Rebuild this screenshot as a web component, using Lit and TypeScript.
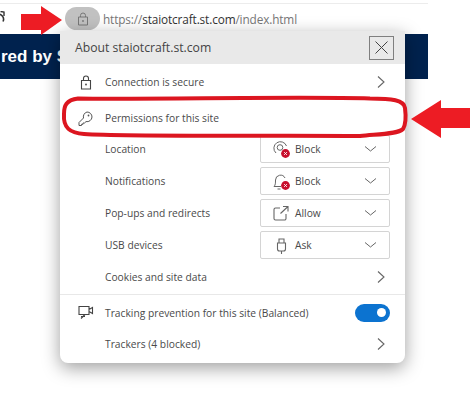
import { LitElement, html, css, svg } from "lit";
import { customElement } from "lit/decorators.js";

const chev = html`<svg class="chev" width="10" height="14" viewBox="0 0 10 14"><path d="M2 1.500 8 7 2 12.500" fill="none" stroke="#666" stroke-width="1.100"/></svg>`;
const down = html`<svg class="down" width="13" height="8" viewBox="0 0 13 8"><path d="M1 1.500l5.500 4.500L12 1.500" fill="none" stroke="#666" stroke-width="1"/></svg>`;
const badge = svg`<circle cx="13.500" cy="13.500" r="4.400" fill="#c8102e"/><path d="M12.200 12.200l2.600 2.600M14.800 12.200l-2.600 2.600" stroke="#fff" stroke-width="1"/>`;

const selects = {
  loc: svg`<path d="M4 13A6.500 6.500 0 1 1 14.500 6" fill="none" stroke="#666" stroke-width="1"/><circle cx="8" cy="7.500" r="2.800" fill="none" stroke="#666" stroke-width="1"/>${badge}`,
  bell: svg`<path d="M2 14.500c1.500-1.500 1.500-3.500 1.500-6.500a5 5 0 0 1 9.500-2M2 14.500h7M5.500 17h3" fill="none" stroke="#666" stroke-width="1"/>${badge}`,
  pop: svg`<path d="M8 4H3.500A1.500 1.500 0 0 0 2 5.500v9A1.500 1.500 0 0 0 3.500 16h9a1.500 1.500 0 0 0 1.500-1.500V10M8.500 9.500L16 2.500M11 2.500h5v5" fill="none" stroke="#666" stroke-width="1.100"/>`,
  usb: svg`<path d="M7 7V3h5v4M5.500 7h8v6a2 2 0 0 1-2 2h-4a2 2 0 0 1-2-2zM9.500 15v3" fill="none" stroke="#666" stroke-width="1.100"/>`,
};

const rows = [
  { label: "Location", icon: selects.loc, value: "Block" },
  { label: "Notifications", icon: selects.bell, value: "Block" },
  { label: "Pop-ups and redirects", icon: selects.pop, value: "Allow" },
  { label: "USB devices", icon: selects.usb, value: "Ask" },
];

@customElement("app-root")
export class AppRoot extends LitElement {
  static styles = css`
    :host { display: block; width: 474px; height: 402px; position: relative; overflow: hidden; background: #fff; font-family: "Open Sans", "Noto Sans", sans-serif; color: #4a4a4a; }
    .bar { width: 428px; height: 34px; box-sizing: border-box; border-top: 1px solid #ececec; margin-top: 3px; display: flex; align-items: center; padding: 0 0 4px 0; }
    .reload { width: 65px; flex: none; display: flex; }
    .pill { width: 35px; height: 23px; border-radius: 12px; background: #c1c1c1; display: flex; align-items: center; justify-content: center; }
    .url { margin-left: 3px; font-size: 11.800px; color: #777; letter-spacing: -0.13px; white-space: nowrap; }
    .url b { font-weight: 400; color: #333; }
    .banner { width: 428px; height: 45px; margin-top: -3px; background: #00224e; color: #fff; font: 700 17px "Liberation Sans", sans-serif; display: flex; align-items: center; white-space: nowrap; padding-left: 1px; box-sizing: border-box; }
    .panel { position: absolute; left: 60px; top: 31px; width: 345px; height: 332px; background: #fff; border-radius: 0 0 8px 8px; box-shadow: 0 5px 18px rgba(0,0,0,.38); display: flex; flex-direction: column; font-size: 10.250px; }
    .head { height: 33px; flex: none; background: #e9e9e9; display: flex; align-items: center; justify-content: space-between; padding: 0 11px 0 15px; font-size: 12.200px; color: #444; }
    .close { width: 25px; height: 24px; border: 1.500px solid #7f7f7f; box-sizing: border-box; display: flex; align-items: center; justify-content: center; }
    .row { display: flex; align-items: center; padding: 0 15px 0 20px; }
    .conn { height: 36px; }
    .perm { height: 36px; }
    .ic { width: 25px; flex: none; display: flex; }
    .ic.key { width: 27px; margin-left: -2px; }
    .indent { padding-left: 45px; }
    .grow { flex: 1; white-space: nowrap; }
    .list { display: flex; flex-direction: column; gap: 4px; margin-top: -1px; }
    .sel-row { height: 28px; }
    .sel { width: 130px; height: 28px; box-sizing: border-box; border: 1px solid #d4d4d4; border-radius: 2px; display: flex; align-items: center; padding: 0 12px 0 11px; }
    .sel svg.i { flex: none; margin-right: 4px; }
    .sel span { flex: 1; }
    .cookies { height: 34px; margin-top: 1px; }
    .cookies .chev, .conn .chev, .track .chev { margin-right: 4px; }
    hr { margin: 0; border: 0; border-top: 1px solid #e8e8e8; flex: none; }
    .tp { height: 35px; padding-left: 18px; }
    .tp .ic { width: 27px; }
    .track { height: 28px; }
    .toggle { width: 35px; height: 18px; border-radius: 9px; background: #0c73d0; position: relative; }
    .toggle i { position: absolute; right: 4px; top: 4.500px; width: 9px; height: 9px; border-radius: 50%; background: #fff; }
    .marks { position: absolute; inset: 0; pointer-events: none; }
  `;

  render() {
    return html`
      <div class="bar">
        <div class="reload"><svg width="6" height="16" viewBox="0 0 6 16"><path d="M-3 3.500A5 5 0 0 1 3 10.500" fill="none" stroke="#333" stroke-width="1.600"/><path d="M0.500 .5L4 1v4" fill="none" stroke="#333" stroke-width="1.400"/></svg></div>
        <div class="pill">
          <svg width="12" height="14" viewBox="0 0 12 14"><path d="M3.500 5V3.500a2.500 2.500 0 0 1 5 0V5M1.500 5h9v8h-9z" fill="none" stroke="#777" stroke-width="1"/><circle cx="6" cy="9" r=".9" fill="#777"/></svg>
        </div>
        <div class="url">https://<b>staiotcraft.st.com</b>/index.html</div>
      </div>
      <div class="banner">red by S</div>
      <div class="panel">
        <div class="head">
          <span>About staiotcraft.st.com</span>
          <div class="close"><svg width="13" height="13" viewBox="0 0 13 13"><path d="M.5.500l12 12M12.500.500l-12 12" stroke="#444" stroke-width="1"/></svg></div>
        </div>
        <div class="row conn">
          <div class="ic"><svg width="12" height="15" viewBox="0 0 12 15"><path d="M3.500 5.500V3.500a2.500 2.500 0 0 1 5 0v2M1.500 5.500h9v8.500h-9z" fill="none" stroke="#444" stroke-width="1.100"/><circle cx="6" cy="9.500" r=".9" fill="#444"/></svg></div>
          <div class="grow">Connection is secure</div>${chev}
        </div>
        <div class="row perm">
          <div class="ic key"><svg width="15" height="15" viewBox="0 0 15 15"><path d="M9 1A5 5 0 0 1 14 6a5 5 0 0 1-6 4.600L6.500 12H5v1.300H3.500V14.500H1v-3l4.500-4.500A5 5 0 0 1 9 1z" fill="none" stroke="#555" stroke-width="1"/><circle cx="10.500" cy="4.500" r=".9" fill="#555"/></svg></div>
          <div class="grow">Permissions for this site</div>
        </div>
        <div class="list">
          ${rows.map((r) => html`
            <div class="row sel-row indent">
              <div class="grow">${r.label}</div>
              <div class="sel"><svg class="i" width="19" height="19" viewBox="0 0 19 19">${r.icon}</svg><span>${r.value}</span>${down}</div>
            </div>`)}
        </div>
        <div class="row cookies indent"><div class="grow">Cookies and site data</div>${chev}</div>
        <hr />
        <div class="row tp">
          <div class="ic"><svg width="16" height="15" viewBox="0 0 16 15"><path d="M1 1.500h10v8H1zM11 4.500l3.500-2v6l-3.500-2M3 13.500l4-4M3 11.500h4" fill="none" stroke="#444" stroke-width="1.100"/></svg></div>
          <div class="grow">Tracking prevention for this site (Balanced)</div>
          <div class="toggle"><i></i></div>
        </div>
        <div class="row track indent"><div class="grow">Trackers (4 blocked)</div>${chev}</div>
      </div>
      <svg class="marks" width="474" height="402" viewBox="0 0 474 402">
        <path d="M21 14H41V6L62 20 41 35V30H21z" fill="#ed1c24"/>
        <path d="M411 119L441 100V108H470V128H441V138z" fill="#ed1c24"/>
        <path d="M78 98.500C150 99.500 300 96.500 370 98.500C392 98.500 404 100 405 108C406 116 406 124 403 129C398 134 380 134 360 136C300 135 130 137 84 134C70 133 63 128 64 114C64 106 66 100 78 98.500z" fill="none" stroke="#dc1620" stroke-width="4"/>
      </svg>
    `;
  }
}
